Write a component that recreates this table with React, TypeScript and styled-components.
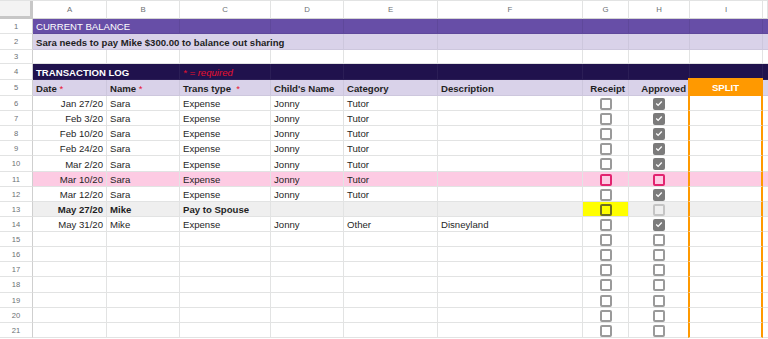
import styled, { createGlobalStyle } from "styled-components"

const GlobalStyle = createGlobalStyle`
    html, body {
        margin: 0;
        padding: 0;
        background: #fff;
    }
    body {
        font-family: "Liberation Sans", Arial, sans-serif;
        overflow: hidden;
    }
`

// row header + columns A..I + the sliver of J
const COLS = "33px 74px 73px 91px 73px 94px 145px 46px 61px 73px 1fr"
const LINE = "#e2e3e3"
const ORANGE = "#ff9900"

const Sheet = styled.div`
    width: 768px;
    height: 339px;
    overflow: hidden;
    background: #fff;
`

const Row = styled.div<{ $h: number; $bg?: string; $line?: string; $ink?: string }>`
    --line: ${p => p.$line || LINE};
    display: grid;
    grid-template-columns: ${COLS};
    height: ${p => p.$h}px;
    background: ${p => p.$bg || "#fff"};
    color: ${p => p.$ink || "#1f1f1f"};
    font-size: 9.6px;
`

const HeadRow = styled(Row)`
    border-top: 1px solid ${LINE};
    box-sizing: border-box;
`

const Corner = styled.div`
    background: #f3f3f3;
    border-right: 3px solid #c7c7c7;
    border-bottom: 3px solid #c7c7c7;
    box-sizing: border-box;
`

const ColHead = styled.div`
    display: flex;
    align-items: center;
    justify-content: center;
    font-size: 7.8px;
    color: #6b6f73;
    border-right: 1px solid ${LINE};
    border-bottom: 1px solid #d4d4d4;
    box-sizing: border-box;
`

const RowNum = styled.div`
    display: flex;
    align-items: center;
    justify-content: center;
    background: #fff;
    font-size: 7.6px;
    color: #6b6f73;
    border-right: 1px solid #cfcfcf;
    border-bottom: 1px solid ${LINE};
    box-sizing: border-box;
`

const Cell = styled.div<{ $align?: "left" | "right" | "center"; $bold?: boolean; $span?: number; $bg?: string }>`
    display: flex;
    align-items: center;
    justify-content: ${p => (p.$align === "right" ? "flex-end" : p.$align === "center" ? "center" : "flex-start")};
    grid-column: span ${p => p.$span || 1};
    min-width: 0;
    padding: 1px 3px 0;
    box-sizing: border-box;
    white-space: pre;
    overflow: hidden;
    font-weight: ${p => (p.$bold ? "bold" : "normal")};
    background: ${p => p.$bg || "transparent"};
    border-right: 1px solid var(--line);
    border-bottom: 1px solid var(--line);
`

const Req = styled.span`
    color: #e8112d;
    font-weight: normal;
`

const Note = styled.span`
    color: #e8112d;
    font-style: italic;
`

const SplitHead = styled.div`
    display: flex;
    align-items: center;
    justify-content: center;
    margin: -2px 0 0 -2px;
    background: ${ORANGE};
    color: #fff;
    font-weight: bold;
    font-size: 9.6px;
`

const SplitCell = styled.div`
    margin-left: -2px;
    border-left: 2px solid ${ORANGE};
    border-right: 2px solid ${ORANGE};
    border-bottom: 1px solid var(--line);
`

type Tone = "plain" | "checked" | "pink" | "yellow" | "faint"

const boxBorder: Record<Tone, string> = {
    plain: "#9a9a9a",
    checked: "#7b7b7b",
    pink: "#e2246f",
    yellow: "#6f6f22",
    faint: "#c4c4c4",
}

const Box = styled.span<{ $tone: Tone }>`
    display: flex;
    align-items: center;
    justify-content: center;
    width: 12px;
    height: 12px;
    box-sizing: border-box;
    border: 2px solid ${p => boxBorder[p.$tone]};
    border-radius: 2px;
    background: ${p => (p.$tone === "checked" ? "#7b7b7b" : "transparent")};
`

const Check = ({ tone }: { tone: Tone }) => (
    <Box $tone={tone}>
        {tone === "checked" && (
            <svg width="9" height="9" viewBox="0 0 9 9">
                <path d="M1.4 4.6 L3.5 6.6 L7.6 2.3" fill="none" stroke="#fff" strokeWidth="1.5" />
            </svg>
        )}
    </Box>
)

type Tx = {
    date: string
    name: string
    type: string
    child: string
    cat: string
    desc: string
    approved: boolean
    look?: "pink" | "spouse"
}

const log: Tx[] = [
    { date: "Jan 27/20", name: "Sara", type: "Expense", child: "Jonny", cat: "Tutor", desc: "", approved: true },
    { date: "Feb 3/20", name: "Sara", type: "Expense", child: "Jonny", cat: "Tutor", desc: "", approved: true },
    { date: "Feb 10/20", name: "Sara", type: "Expense", child: "Jonny", cat: "Tutor", desc: "", approved: true },
    { date: "Feb 24/20", name: "Sara", type: "Expense", child: "Jonny", cat: "Tutor", desc: "", approved: true },
    { date: "Mar 2/20", name: "Sara", type: "Expense", child: "Jonny", cat: "Tutor", desc: "", approved: true },
    { date: "Mar 10/20", name: "Sara", type: "Expense", child: "Jonny", cat: "Tutor", desc: "", approved: false, look: "pink" },
    { date: "Mar 12/20", name: "Sara", type: "Expense", child: "Jonny", cat: "Tutor", desc: "", approved: true },
    { date: "May 27/20", name: "Mike", type: "Pay to Spouse", child: "", cat: "", desc: "", approved: false, look: "spouse" },
    { date: "May 31/20", name: "Mike", type: "Expense", child: "Jonny", cat: "Other", desc: "Disneyland", approved: true },
]

const EMPTY_ROWS = 7
const heightOf = (n: number) => (n === 10 || n === 18 ? 16 : 15)

const rowBg = (look?: Tx["look"]) => (look === "pink" ? "#fdcbe3" : look === "spouse" ? "#efefef" : "#fff")

const DataRow = ({ n, tx }: { n: number; tx?: Tx }) => {
    const bold = tx?.look === "spouse"
    const receipt: Tone = tx?.look === "pink" ? "pink" : tx?.look === "spouse" ? "yellow" : "plain"
    const approved: Tone = tx?.look === "pink" ? "pink" : tx?.look === "spouse" ? "faint" : tx?.approved ? "checked" : "plain"

    return (
        <Row $h={heightOf(n)} $bg={rowBg(tx?.look)}>
            <RowNum>{n}</RowNum>
            <Cell $align="right" $bold={bold}>{tx?.date}</Cell>
            <Cell $bold={bold}>{tx?.name}</Cell>
            <Cell $bold={bold}>{tx?.type}</Cell>
            <Cell>{tx?.child}</Cell>
            <Cell>{tx?.cat}</Cell>
            <Cell>{tx?.desc}</Cell>
            <Cell $align="center" $bg={tx?.look === "spouse" ? "#ffff00" : undefined}>
                <Check tone={receipt} />
            </Cell>
            <Cell $align="center">
                <Check tone={approved} />
            </Cell>
            <SplitCell />
            <Cell />
        </Row>
    )
}

const App = () => {
    const letters = ["A", "B", "C", "D", "E", "F", "G", "H", "I", ""]

    return (
        <Sheet>
            <GlobalStyle />

            <HeadRow $h={19}>
                <Corner />
                {letters.map((l, i) => (
                    <ColHead key={i}>{l}</ColHead>
                ))}
            </HeadRow>

            <Row $h={15} $bg="#674ea7" $ink="#fff" $line="rgba(0,0,0,0.07)">
                <RowNum>1</RowNum>
                <Cell $span={2}>CURRENT BALANCE</Cell>
                {Array.from({ length: 8 }, (_, i) => <Cell key={i} />)}
            </Row>

            <Row $h={16} $bg="#d9d2e9" $line="rgba(0,0,0,0.05)">
                <RowNum>2</RowNum>
                <Cell $span={4} $bold>Sara needs to pay Mike $300.00 to balance out sharing</Cell>
                {Array.from({ length: 6 }, (_, i) => <Cell key={i} />)}
            </Row>

            <Row $h={14}>
                <RowNum>3</RowNum>
                {Array.from({ length: 10 }, (_, i) => <Cell key={i} />)}
            </Row>

            <Row $h={16} $bg="#20124d" $ink="#fff" $line="rgba(255,255,255,0.05)">
                <RowNum>4</RowNum>
                <Cell $span={2} $bold>TRANSACTION LOG</Cell>
                <Cell><Note>* = required</Note></Cell>
                {Array.from({ length: 7 }, (_, i) => <Cell key={i} />)}
            </Row>

            <Row $h={16} $bg="#d9d2e9" $line="rgba(0,0,0,0.05)">
                <RowNum>5</RowNum>
                <Cell $bold>Date <Req>*</Req></Cell>
                <Cell $bold>Name <Req>*</Req></Cell>
                <Cell $bold>Trans type  <Req>*</Req></Cell>
                <Cell $bold>Child's Name</Cell>
                <Cell $bold>Category</Cell>
                <Cell $bold>Description</Cell>
                <Cell $bold $align="right">Receipt</Cell>
                <Cell $bold $align="right">Approved</Cell>
                <SplitHead>SPLIT</SplitHead>
                <Cell />
            </Row>

            {log.map((tx, i) => (
                <DataRow key={i} n={i + 6} tx={tx} />
            ))}
            {Array.from({ length: EMPTY_ROWS }, (_, i) => (
                <DataRow key={"e" + i} n={log.length + 6 + i} />
            ))}
        </Sheet>
    )
}

export default App
